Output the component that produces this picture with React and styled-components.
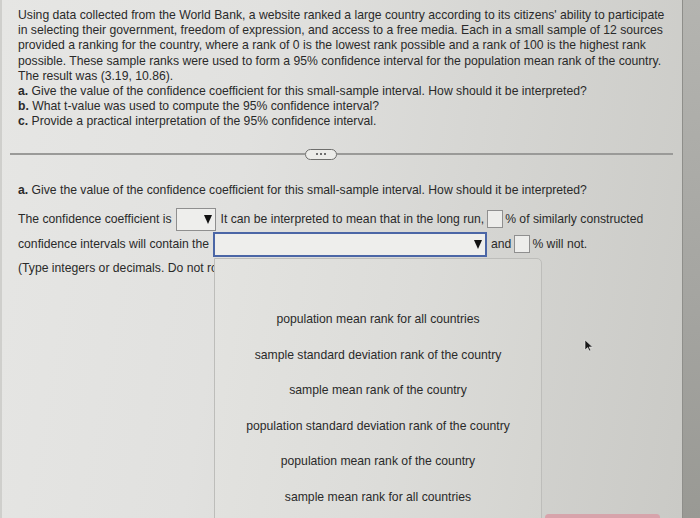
import React from 'react';
import styled, { createGlobalStyle } from 'styled-components';

const Global = createGlobalStyle`
  html, body { margin: 0; padding: 0; }
  body {
    width: 700px;
    height: 518px;
    overflow: hidden;
    font-family: "Liberation Sans", Arial, sans-serif;
    color: #2a2a2a;
  }
`

const Screen = styled.div`
  display: flex;
  width: 700px;
  height: 518px;
  overflow: hidden;
  position: relative;
`

const Main = styled.main`
  flex: 1;
  position: relative;
  padding: 8px 0 0 16px;
  border-left: 2px solid #cfcfcc;
  background: linear-gradient(100deg, #e6e6e4 0%, #e1e1df 35%, #d6d6d3 65%, #cacac6 100%);
  font-size: 12.2px;
`

const Edge = styled.div`
  width: 17px;
  background: linear-gradient(180deg, #b4b4b0 0%, #a4a4a0 60%, #999994 100%);
  border-left: 1px solid #8e8e8a;
`

const Prompt = styled.div`
  line-height: 15.2px;
`

const Line = styled.span`
  display: block;
  white-space: nowrap;
`

const Tag = styled.b`
  font-weight: 700;
`

const Divider = styled.div`
  display: flex;
  align-items: center;
  margin: 19px 0 0 -8px;
  width: 663px;
  &::before, &::after {
    content: '';
    height: 1.5px;
    background: #9a9a98;
  }
  &::before { width: 295px; }
  &::after { flex: 1; }
`

const Pill = styled.div`
  display: flex;
  gap: 2px;
  align-items: center;
  justify-content: center;
  width: 30px;
  height: 9px;
  border: 1.4px solid #6e6e6c;
  border-radius: 6px;
  background: #ecece9;
  span {
    width: 2px;
    height: 2px;
    border-radius: 50%;
    background: #444;
  }
`

const Question = styled.p`
  margin: 23px 0 0;
  white-space: nowrap;
`

const Answer = styled.div`
  margin-top: 10px;
  display: flex;
  flex-direction: column;
`

const Row = styled.div`
  display: flex;
  align-items: center;
  height: ${p => p.$h || 24}px;
  white-space: nowrap;
`

const Select = styled.div`
  display: flex;
  align-items: center;
  justify-content: flex-end;
  box-sizing: border-box;
  width: ${p => p.$w}px;
  height: ${p => p.$h}px;
  margin: 0 ${p => p.$mr || 4}px 0 ${p => p.$ml || 4}px;
  padding-right: 3px;
  border: ${p => p.$active ? '2px solid #4b66a6' : '1px solid #8f8f8f'};
  background: #eeeeec;
  &::after {
    content: '';
    border-left: 4.5px solid transparent;
    border-right: 4.5px solid transparent;
    border-top: 9px solid #111;
  }
`

const Box = styled.span`
  display: inline-block;
  box-sizing: border-box;
  width: 16px;
  height: 18px;
  margin: 0 2px 0 3px;
  border: 1px solid #8f8f8f;
  background: #ededeb;
`

const Menu = styled.ul`
  position: absolute;
  left: 212px;
  top: 258px;
  width: 328px;
  height: 280px;
  box-sizing: border-box;
  margin: 0;
  padding: 43px 0 0;
  list-style: none;
  border: 1px solid #bdbdba;
  border-radius: 0 5px 0 0;
  background: linear-gradient(100deg, #e3e3e0 0%, #dcdcd9 55%, #d4d4d0 100%);
  text-align: center;
`

const Item = styled.li`
  height: 35.6px;
  line-height: 35.6px;
  white-space: nowrap;
`

const Cursor = styled.svg`
  position: absolute;
  left: 582px;
  top: 339px;
`

const Tab = styled.div`
  position: absolute;
  left: 543px;
  bottom: -3px;
  width: 115px;
  height: 7px;
  border-radius: 4px;
  background: #d8a3ab;
`

const options = [
  'population mean rank for all countries',
  'sample standard deviation rank of the country',
  'sample mean rank of the country',
  'population standard deviation rank of the country',
  'population mean rank of the country',
  'sample mean rank for all countries',
]

export default function App() {
  return (
    <>
      <Global />
      <Screen>
        <Main>
          <Prompt>
            <Line>Using data collected from the World Bank, a website ranked a large country according to its citizens' ability to participate</Line>
            <Line>in selecting their government, freedom of expression, and access to a free media. Each in a small sample of 12 sources</Line>
            <Line>provided a ranking for the country, where a rank of 0 is the lowest rank possible and a rank of 100 is the highest rank</Line>
            <Line>possible. These sample ranks were used to form a 95% confidence interval for the population mean rank of the country.</Line>
            <Line>The result was (3.19, 10.86).</Line>
            <Line><Tag>a.</Tag> Give the value of the confidence coefficient for this small-sample interval. How should it be interpreted?</Line>
            <Line><Tag>b.</Tag> What t-value was used to compute the 95% confidence interval?</Line>
            <Line><Tag>c.</Tag> Provide a practical interpretation of the 95% confidence interval.</Line>
          </Prompt>

          <Divider>
            <Pill><span /><span /><span /></Pill>
          </Divider>

          <Question><Tag>a.</Tag> Give the value of the confidence coefficient for this small-sample interval. How should it be interpreted?</Question>

          <Answer>
            <Row $h={25}>
              The confidence coefficient is
              <Select $w={40} $h={23} $ml={4} $mr={5} />
              It can be interpreted to mean that in the long run,
              <Box />
              % of similarly constructed
            </Row>
            <Row $h={25}>
              confidence intervals will contain the
              <Select $w={274} $h={25} $active />
              and
              <Box />
              % will not.
            </Row>
            <Row $h={22}>(Type integers or decimals. Do not round.)</Row>
          </Answer>

          <Menu>
            {options.map(o => <Item key={o}>{o}</Item>)}
          </Menu>

          <Cursor width="10" height="13" viewBox="0 0 10 13">
            <path d="M1 1 L1 11 L3.6 8.6 L5.4 12 L6.8 11.3 L5.1 8 L8.6 8 Z" fill="#1a1a1a" stroke="#eee" strokeWidth="0.6" />
          </Cursor>
          <Tab />
        </Main>
        <Edge />
      </Screen>
    </>
  )
}
